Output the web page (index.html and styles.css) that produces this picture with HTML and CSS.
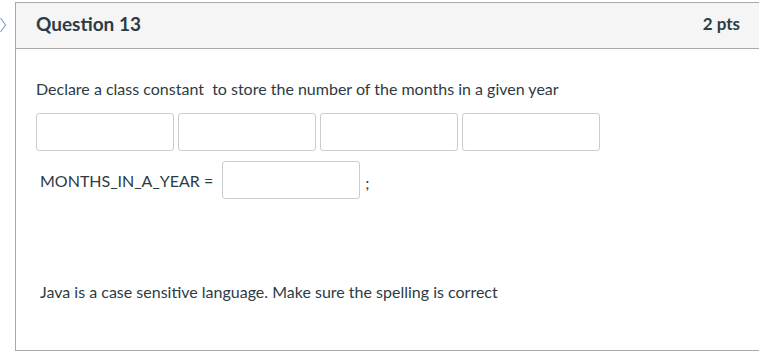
FILE: index.html
```html
<!DOCTYPE html>
<html lang="en">
  <head>
    <meta charset="UTF-8" />
    <title>Question 13</title>
    <link rel="stylesheet" href="styles.css">
  </head>
  <body>
    <div class="page">
      <div class="gutter">
        <svg class="chevron" width="8" height="16" viewBox="0 0 8 16">
          <path d="M0.5 1 L5.5 8 L0.5 15" fill="none" stroke="#7aa7d2" stroke-width="1.2" />
        </svg>
      </div>
      <div class="question">
        <div class="header">
          <div class="title">Question 13</div>
          <div class="points">2 pts</div>
        </div>
        <div class="content">
          <p class="prompt">Declare a class constant&nbsp; to store the number of the months in a given year</p>
          <div class="boxes">
            <input class="blank" type="text" />
            <input class="blank" type="text" />
            <input class="blank" type="text" />
            <input class="blank" type="text" />
          </div>
          <div class="line">
            <span class="code">MONTHS_IN_A_YEAR =</span>
            <input class="blank" type="text" />
            <span class="semi">;</span>
          </div>
          <p class="note">Java is a case sensitive language. Make sure the spelling is correct</p>
        </div>
      </div>
    </div>
  </body>
</html>
```

FILE: styles.css
```css
*,
*::before,
*::after {
  box-sizing: border-box;
}

body {
  margin: 0;
  overflow: hidden;
  background: #fff;
  font-family: Lato, "Open Sans", sans-serif;
  color: #2d3b45;
}

.page {
  display: flex;
  padding-top: 2px;
}

.gutter {
  width: 15px;
  flex-shrink: 0;
  padding-top: 15px;
}

.chevron {
  display: block;
}

.question {
  width: 746px;
  flex-shrink: 0;
  height: 349px;
  border: 1px solid #a9a9a9;
}

/* Header strip */

.header {
  display: flex;
  justify-content: space-between;
  align-items: center;
  height: 46px;
  padding: 0 20px 4px;
  background-color: #f5f5f5;
  border-bottom: 1px solid #a9a9a9;
}

.title {
  font-size: 19px;
  font-weight: bold;
}

.points {
  font-size: 17px;
  font-weight: bold;
}

/* Body */

.content {
  padding: 30px 20px 0;
}

.prompt {
  margin: 0;
  font-size: 16px;
  line-height: 20px;
}

.boxes {
  display: flex;
  gap: 4px;
  margin-top: 14px;
}

.blank {
  width: 138px;
  height: 38px;
  margin: 0;
  border: 1px solid #c7cdd1;
  border-radius: 3px;
  background: #fff;
}

.line {
  display: flex;
  align-items: center;
  margin-top: 10px;
  padding-left: 4px;
  font-size: 16px;
}

.code {
  margin-right: 9px;
}

.semi {
  margin-left: 5px;
  padding-top: 4px;
}

.note {
  margin: 83px 0 0;
  padding-left: 4px;
  font-size: 16px;
  line-height: 20px;
}
```
